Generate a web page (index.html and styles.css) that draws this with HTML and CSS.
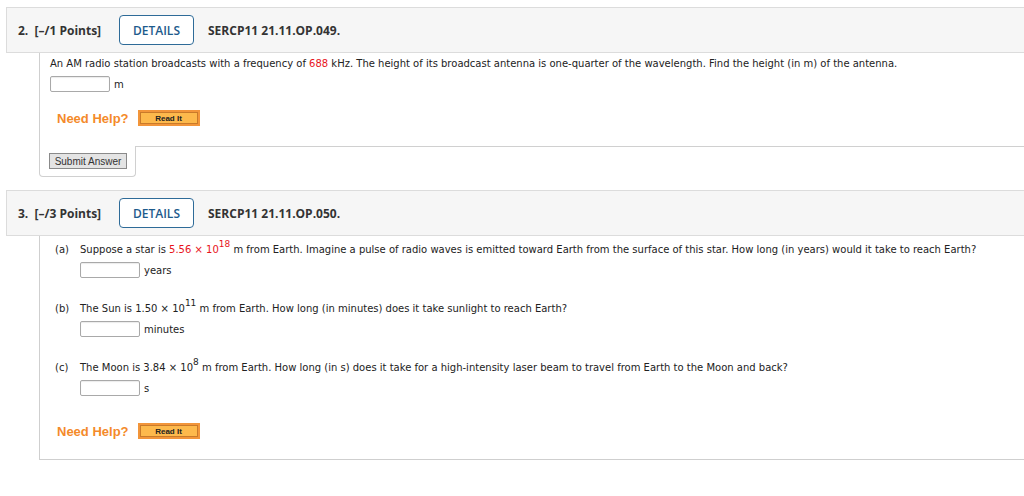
FILE: index.html
```html
<!DOCTYPE html>
<html>
<head>
<meta charset="utf-8">
<link rel="stylesheet" href="styles.css">
</head>
<body>
<div class="page">
  <section class="question">
    <div class="q-header">
      <span class="points">2.&nbsp; [–/1 Points]</span>
      <button class="details">DETAILS</button>
      <span class="code">SERCP11 21.11.OP.049.</span>
    </div>
    <div class="q-body q1">
      <p class="stem">An AM radio station broadcasts with a frequency of <span class="red">688</span> kHz. The height of its broadcast antenna is one-quarter of the wavelength. Find the height (in m) of the antenna.</p>
      <div class="answer"><span class="box"></span><span class="unit">m</span></div>
      <div class="help"><span class="need">Need Help?</span><span class="readit">Read It</span></div>
    </div>
    <div class="q-footer">
      <div class="submit-tab"><button class="submit">Submit Answer</button></div>
      <div class="footer-rest"></div>
    </div>
  </section>

  <section class="question second">
    <div class="q-header">
      <span class="points">3.&nbsp; [–/3 Points]</span>
      <button class="details">DETAILS</button>
      <span class="code">SERCP11 21.11.OP.050.</span>
    </div>
    <div class="q-body q2">
      <div class="part">
        <span class="label">(a)</span>
        <div class="part-main">
          <p class="stem">Suppose a star is <span class="red num">5.56 × 10<sup>18</sup></span> m from Earth. Imagine a pulse of radio waves is emitted toward Earth from the surface of this star. How long (in years) would it take to reach Earth?</p>
          <div class="answer"><span class="box"></span><span class="unit">years</span></div>
        </div>
      </div>
      <div class="part">
        <span class="label">(b)</span>
        <div class="part-main">
          <p class="stem">The Sun is <span class="num">1.50 × 10<sup>11</sup></span> m from Earth. How long (in minutes) does it take sunlight to reach Earth?</p>
          <div class="answer"><span class="box"></span><span class="unit">minutes</span></div>
        </div>
      </div>
      <div class="part">
        <span class="label">(c)</span>
        <div class="part-main">
          <p class="stem">The Moon is <span class="num">3.84 × 10<sup>8</sup></span> m from Earth. How long (in s) does it take for a high-intensity laser beam to travel from Earth to the Moon and back?</p>
          <div class="answer"><span class="box"></span><span class="unit">s</span></div>
        </div>
      </div>
      <div class="help"><span class="need">Need Help?</span><span class="readit">Read It</span></div>
    </div>
  </section>
</div>
</body>
</html>
```

FILE: styles.css
```css
html, body {
  margin: 0;
  padding: 0;
  background: #fff;
}
.page {
  padding: 7px 0 0 6px;
  font-family: "DejaVu Sans", Verdana, sans-serif;
  color: #222;
}
.question.second {
  margin-top: 13px;
}
.q-header {
  display: flex;
  align-items: center;
  height: 44px;
  border: 1px solid #dcdcdc;
  border-right: none;
  background: #f6f6f6;
  padding-left: 11px;
  font-family: "Open Sans", sans-serif;
  font-weight: 700;
  font-size: 12px;
  color: #333;
}
.points {
  width: 101px;
}
.details {
  width: 75px;
  height: 30px;
  border: 1px solid #2e6b98;
  border-radius: 4px;
  background: #fff;
  color: #1d5b8c;
  font-family: "Open Sans", sans-serif;
  font-weight: 600;
  font-size: 12px;
  padding: 0;
  margin-right: 14px;
}
.code {
  color: #333;
}
.q-body {
  margin-left: 33px;
  border-left: 1px solid #cfcfcf;
  font-size: 10px;
}
.q1 {
  padding: 4px 0 20px 10px;
}
.stem {
  margin: 0;
  line-height: 14px;
}
.red {
  color: #e8141b;
}
.num sup {
  font-size: 9px;
  line-height: 0;
  vertical-align: 6px;
}
.answer {
  display: flex;
  align-items: center;
  margin-top: 5px;
  height: 16px;
}
.box {
  width: 58px;
  height: 14px;
  border: 1px solid #a9a9a9;
  border-radius: 2px;
  background: #fff;
  box-shadow: inset 0 1px 1px rgba(0,0,0,0.08);
}
.unit {
  margin-left: 4px;
}
.help {
  display: flex;
  align-items: center;
  margin-top: 18px;
  padding-left: 7px;
}
.need {
  font-family: "Liberation Sans", Arial, sans-serif;
  font-weight: 700;
  font-size: 13px;
  color: #f48a2a;
  margin-right: 9px;
}
.readit {
  display: inline-flex;
  align-items: center;
  justify-content: center;
  width: 58px;
  height: 12px;
  border: 2px solid #f2953a;
  outline: 1px solid #c97a2a;
  outline-offset: -3px;
  background: #fdb94c;
  font-family: "Liberation Sans", Arial, sans-serif;
  font-weight: 700;
  font-size: 8px;
  color: #222;
}
.q-footer {
  display: flex;
  margin-left: 33px;
}
.submit-tab {
  width: 97px;
  height: 31px;
  border: 1px solid #d0d0d0;
  border-top: none;
  border-radius: 0 0 4px 4px;
  padding: 7px 0 0 9px;
  box-sizing: border-box;
}
.submit {
  width: 78px;
  height: 16px;
  padding: 0;
  border: 1px solid #8a8a8a;
  background: #e4e4e4;
  font-family: "Liberation Sans", Arial, sans-serif;
  font-size: 10px;
  color: #333;
  display: block;
}
.footer-rest {
  flex: 1;
  border-top: 1px solid #d0d0d0;
}
.q2 {
  border-bottom: 1px solid #cfcfcf;
  padding: 7px 0 20px 15px;
}
.part {
  display: flex;
  margin-bottom: 24px;
}
.label {
  width: 25px;
  line-height: 14px;
}
.q2 .help {
  margin-top: 27px;
  padding-left: 2px;
}
```
